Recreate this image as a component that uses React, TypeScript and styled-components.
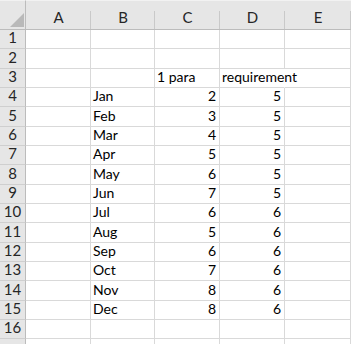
import styled, { createGlobalStyle } from 'styled-components';

const GlobalStyle = createGlobalStyle`
  html, body {
    margin: 0;
    padding: 0;
    background: #ffffff;
    overflow: hidden;
  }
`;

const COLS = ['A', 'B', 'C', 'D', 'E'];
const COL_WIDTHS = [26, 65, 64, 65, 65, 66];
const ROW_HEIGHTS = [19, 20, 19, 19, 20, 19, 19, 20, 19, 19, 20, 19, 19, 20, 19, 19, 19];
const VISIBLE_ROWS = 16;

const months = ['Jan', 'Feb', 'Mar', 'Apr', 'May', 'Jun', 'Jul', 'Aug', 'Sep', 'Oct', 'Nov', 'Dec'];
const para = [2, 3, 4, 5, 6, 7, 6, 5, 6, 7, 8, 8];
const req = [5, 5, 5, 5, 5, 5, 6, 6, 6, 6, 6, 6];

type CellData = { text: string; align: 'left' | 'right'; spill?: boolean };

const cellAt = (row: number, col: number): CellData | null => {
  if (row === 3 && col === 2) return { text: '1 para', align: 'left' };
  if (row === 3 && col === 3) return { text: 'requirement', align: 'left', spill: true };
  const i = row - 4;
  if (i < 0 || i >= 12) return null;
  if (col === 1) return { text: months[i], align: 'left' };
  if (col === 2) return { text: String(para[i]), align: 'right' };
  if (col === 3) return { text: String(req[i]), align: 'right' };
  return null;
};

const Sheet = styled.div`
  display: grid;
  grid-template-columns: ${COL_WIDTHS.map((w) => `${w}px`).join(' ')};
  grid-template-rows: 30px ${ROW_HEIGHTS.map((h) => `${h}px`).join(' ')};
  width: 351px;
  height: 344px;
  overflow: hidden;
  font-family: Lato, 'Liberation Sans', sans-serif;
  font-size: 14px;
  color: #000;
`;

const Corner = styled.div`
  background: #e6e6e6;
  border-top: 1px solid #f2f2f2;
  border-right: 1px solid #bcbcbc;
  border-bottom: 1px solid #bcbcbc;
  box-sizing: border-box;
  display: flex;
  align-items: flex-end;
  justify-content: flex-end;
  padding: 0 1px 2px 0;
`;

const ColHead = styled.div`
  position: relative;
  background: #e6e6e6;
  border-top: 1px solid #f2f2f2;
  border-bottom: 1px solid #bcbcbc;
  box-sizing: border-box;
  display: flex;
  align-items: flex-end;
  justify-content: center;
  padding-bottom: 3px;
  color: #262626;
  font-size: 15px;

  &::after {
    content: '';
    position: absolute;
    right: 0;
    top: 10px;
    bottom: 0;
    width: 1px;
    background: #c9c9c9;
  }
`;

const RowHead = styled.div`
  background: #e6e6e6;
  border-right: 1px solid #bcbcbc;
  border-bottom: 1px solid #cfcfcf;
  box-sizing: border-box;
  display: flex;
  align-items: flex-end;
  justify-content: center;
  padding-bottom: 2px;
  color: #262626;
  font-size: 15px;
`;

const Cell = styled.div<{ $align: 'left' | 'right'; $spill?: boolean }>`
  position: relative;
  z-index: ${({ $spill }) => ($spill ? 1 : 0)};
  background: #ffffff;
  border-right: 1px solid ${({ $spill }) => ($spill ? '#ffffff' : '#d9d9d9')};
  border-bottom: 1px solid #d9d9d9;
  box-sizing: border-box;
  display: flex;
  align-items: flex-end;
  justify-content: ${({ $align }) => ($align === 'right' ? 'flex-end' : 'flex-start')};
  padding: 0 3px 2px 2px;
  white-space: nowrap;
  overflow: visible;
  min-width: 0;
`;

const CornerMark = () => (
  <svg width="14" height="14" viewBox="0 0 14 14">
    <polygon points="14,0 14,14 0,14" fill="#b9b9b9" />
  </svg>
);

export default function App() {
  return (
    <>
      <GlobalStyle />
      <Sheet>
        <Corner>
          <CornerMark />
        </Corner>
        {COLS.map((c) => (
          <ColHead key={c}>{c}</ColHead>
        ))}
        {ROW_HEIGHTS.map((_, r) => {
          const row = r + 1;
          return [
            <RowHead key={`h${row}`}>{row <= VISIBLE_ROWS ? row : ''}</RowHead>,
            ...COLS.map((c, ci) => {
              const data = cellAt(row, ci);
              return (
                <Cell key={`${c}${row}`} $align={data?.align ?? 'left'} $spill={data?.spill}>
                  {data?.text}
                </Cell>
              );
            }),
          ];
        })}
      </Sheet>
    </>
  );
}
